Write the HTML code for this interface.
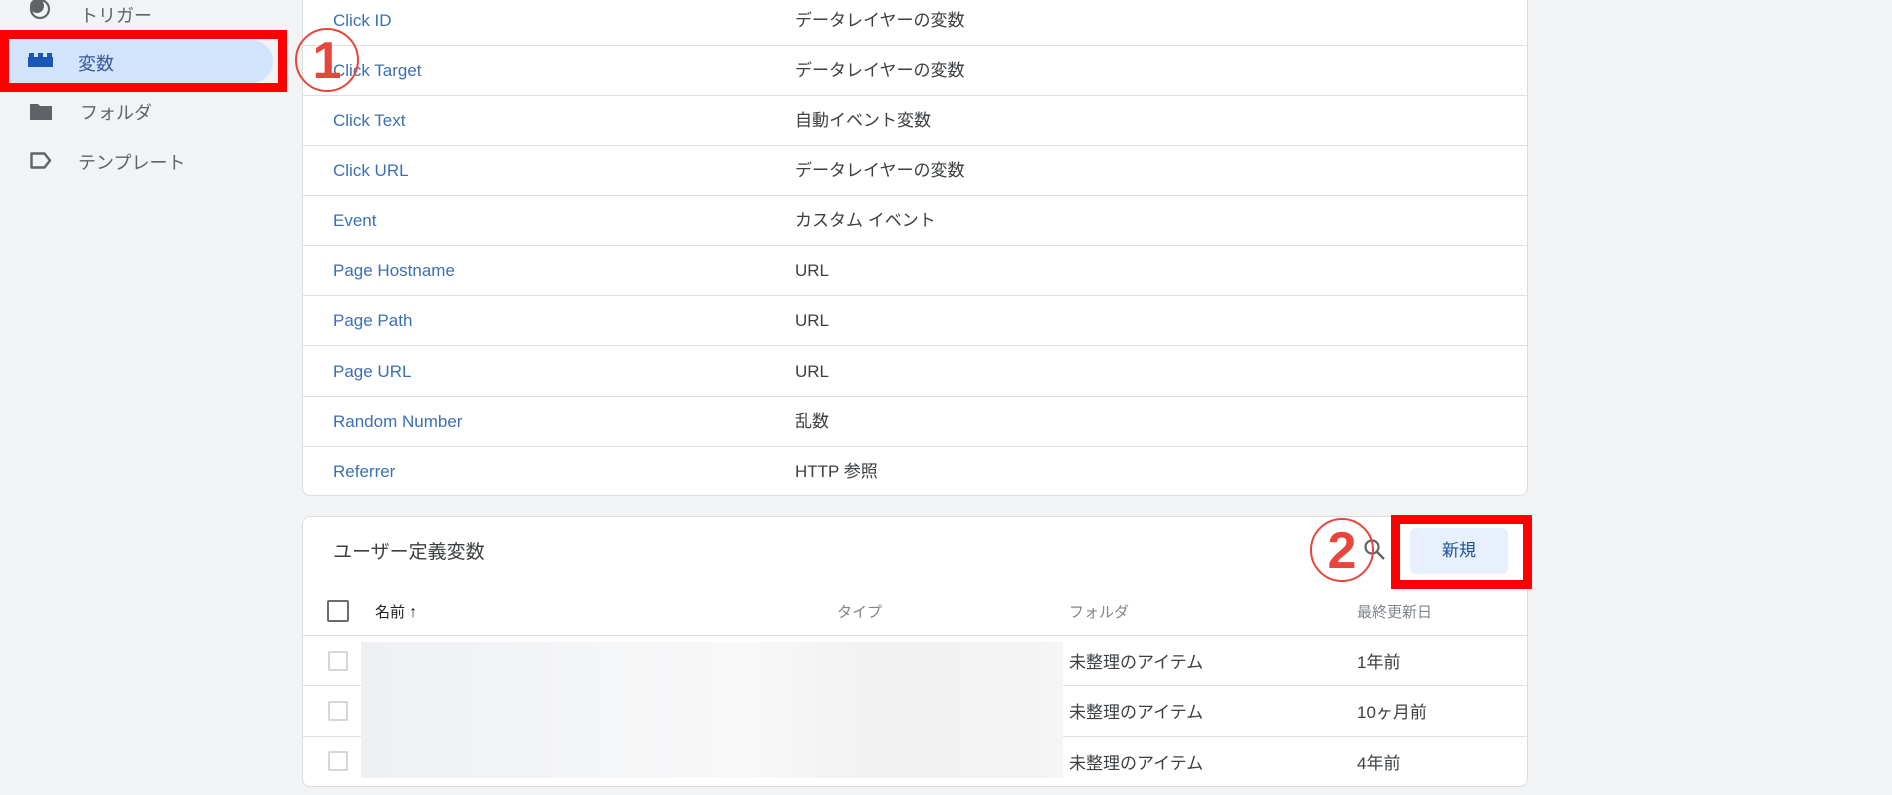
<!DOCTYPE html>
<html><head><meta charset="utf-8"><style>
*{margin:0;padding:0;box-sizing:border-box}
body{width:1892px;height:795px;background:#f1f3f4;font-family:"Liberation Sans","Noto Sans CJK JP",sans-serif;position:relative;overflow:hidden;color:#3c4043}
.a{position:absolute}
.nav{font-size:18px;color:#5f6368}
.card{position:absolute;left:302px;width:1226px;background:#fff;border:1px solid #dadce0;border-radius:8px}
.row{position:absolute;left:0;right:0;height:50px;border-bottom:1px solid #e0e0e0;font-size:17px}
.row span{position:absolute;top:0;line-height:49px;height:49px}
.l{left:30px;color:#3b6fb6}
.r{left:492px;color:#3c4043}
.cb{position:absolute;width:20px;height:20px;border:2px solid #d6d6d6;border-radius:2px}
.red{position:absolute;border:9px solid #f00}
.circ{position:absolute;border:2px solid #e8453c;border-radius:50%;color:#e8453c;font-size:52px;font-weight:bold;text-align:center}
</style></head><body>
<!-- sidebar -->
<svg class="a" style="left:27px;top:0" width="26" height="22" viewBox="0 0 26 22"><circle cx="13" cy="9" r="9" fill="none" stroke="#5f6368" stroke-width="2.2"/><circle cx="10" cy="6" r="7" fill="#5f6368"/></svg>
<div class="a nav" style="left:80px;top:2px">トリガー</div>
<div class="a" style="left:9px;top:40px;width:264px;height:43px;background:#d2e3fc;border-radius:0 22px 22px 0"></div>
<svg class="a" style="left:28px;top:53px" width="25" height="14" viewBox="0 0 25 14"><rect x="0" y="4" width="25" height="10" fill="#1a56b8"/><rect x="1" y="0" width="5" height="5" fill="#1a56b8"/><rect x="10" y="0" width="5" height="5" fill="#1a56b8"/><rect x="19" y="0" width="5" height="5" fill="#1a56b8"/></svg>
<div class="a nav" style="left:78px;top:50px;color:#3b5a9a">変数</div>
<svg class="a" style="left:30px;top:102px" width="22" height="18" viewBox="0 0 22 18"><path d="M0 2h8l2 2h12v14H0z" fill="#5f6368"/></svg>
<div class="a nav" style="left:80px;top:99px">フォルダ</div>
<svg class="a" style="left:30px;top:152px" width="22" height="17" viewBox="0 0 22 17"><path d="M1.5 1.5h13l5.5 7-5.5 7h-13z" fill="none" stroke="#5f6368" stroke-width="2.4" stroke-linejoin="round"/></svg>
<div class="a nav" style="left:78px;top:149px">テンプレート</div>
<div class="red" style="left:0;top:30px;width:287px;height:62px"></div>

<!-- top card -->
<div class="card" style="top:-10px;height:506px">
<div class="row" style="top:5px"><span class="l">Click ID</span><span class="r">データレイヤーの変数</span></div>
<div class="row" style="top:55px"><span class="l">Click Target</span><span class="r">データレイヤーの変数</span></div>
<div class="row" style="top:105px"><span class="l">Click Text</span><span class="r">自動イベント変数</span></div>
<div class="row" style="top:155px"><span class="l">Click URL</span><span class="r">データレイヤーの変数</span></div>
<div class="row" style="top:205px"><span class="l">Event</span><span class="r">カスタム イベント</span></div>
<div class="row" style="top:255px"><span class="l">Page Hostname</span><span class="r">URL</span></div>
<div class="row" style="top:305px"><span class="l">Page Path</span><span class="r">URL</span></div>
<div class="row" style="top:356px"><span class="l">Page URL</span><span class="r">URL</span></div>
<div class="row" style="top:406px"><span class="l">Random Number</span><span class="r">乱数</span></div>
<div class="row" style="top:456px;border:none"><span class="l">Referrer</span><span class="r">HTTP 参照</span></div>
</div>
<div class="circ" style="left:295px;top:28px;width:64px;height:64px;line-height:62px">1</div>

<!-- second card -->
<div class="card" style="top:516px;height:271px">
<div class="a" style="left:30px;top:20px;font-size:19px;color:#3c4043">ユーザー定義変数</div>
<div class="cb" style="left:24px;top:83px;width:22px;height:22px;border-color:#6b6b6b"></div>
<div class="a" style="left:72px;top:84px;font-size:15px;color:#202124">名前 <span style="font-size:16px">↑</span></div>
<div class="a" style="left:534px;top:84px;font-size:15px;color:#80868b">タイプ</div>
<div class="a" style="left:766px;top:84px;font-size:15px;color:#80868b">フォルダ</div>
<div class="a" style="left:1054px;top:84px;font-size:15px;color:#80868b">最終更新日</div>
<div class="a" style="left:0;right:0;top:118px;border-top:1px solid #e0e0e0"></div>
<div class="a" style="left:0;right:0;top:168px;border-top:1px solid #e0e0e0"></div>
<div class="a" style="left:0;right:0;top:219px;border-top:1px solid #e0e0e0"></div>
<div class="cb" style="left:25px;top:134px"></div>
<div class="cb" style="left:25px;top:184px"></div>
<div class="cb" style="left:25px;top:234px"></div>
<div class="a" style="left:58px;top:125px;width:702px;height:136px;background:linear-gradient(90deg,#eef0f4 0%,#f4f5f7 30%,#f8f8f8 55%,#f1f1f1 75%,#f5f5f5 100%)"></div>
<div class="a" style="left:766px;top:131px;font-size:17px">未整理のアイテム</div>
<div class="a" style="left:766px;top:181px;font-size:17px">未整理のアイテム</div>
<div class="a" style="left:766px;top:232px;font-size:17px">未整理のアイテム</div>
<div class="a" style="left:1054px;top:131px;font-size:17px">1年前</div>
<div class="a" style="left:1054px;top:181px;font-size:17px">10ヶ月前</div>
<div class="a" style="left:1054px;top:232px;font-size:17px">4年前</div>
<div class="a" style="left:1107px;top:11px;width:98px;height:46px;background:#e8f0fe;border-radius:6px;font-size:17px;color:#1a4f9c;text-align:center;line-height:46px">新規</div>
</div>
<svg class="a" style="left:1363px;top:538px" width="24" height="24" viewBox="0 0 24 24"><circle cx="9" cy="9" r="6.5" fill="none" stroke="#5f6368" stroke-width="2.2"/><path d="M14 14l7 7" stroke="#5f6368" stroke-width="2.4"/></svg>
<div class="circ" style="left:1310px;top:518px;width:64px;height:64px;line-height:62px">2</div>
<div class="red" style="left:1391px;top:515px;width:141px;height:74px"></div>
</body></html>
